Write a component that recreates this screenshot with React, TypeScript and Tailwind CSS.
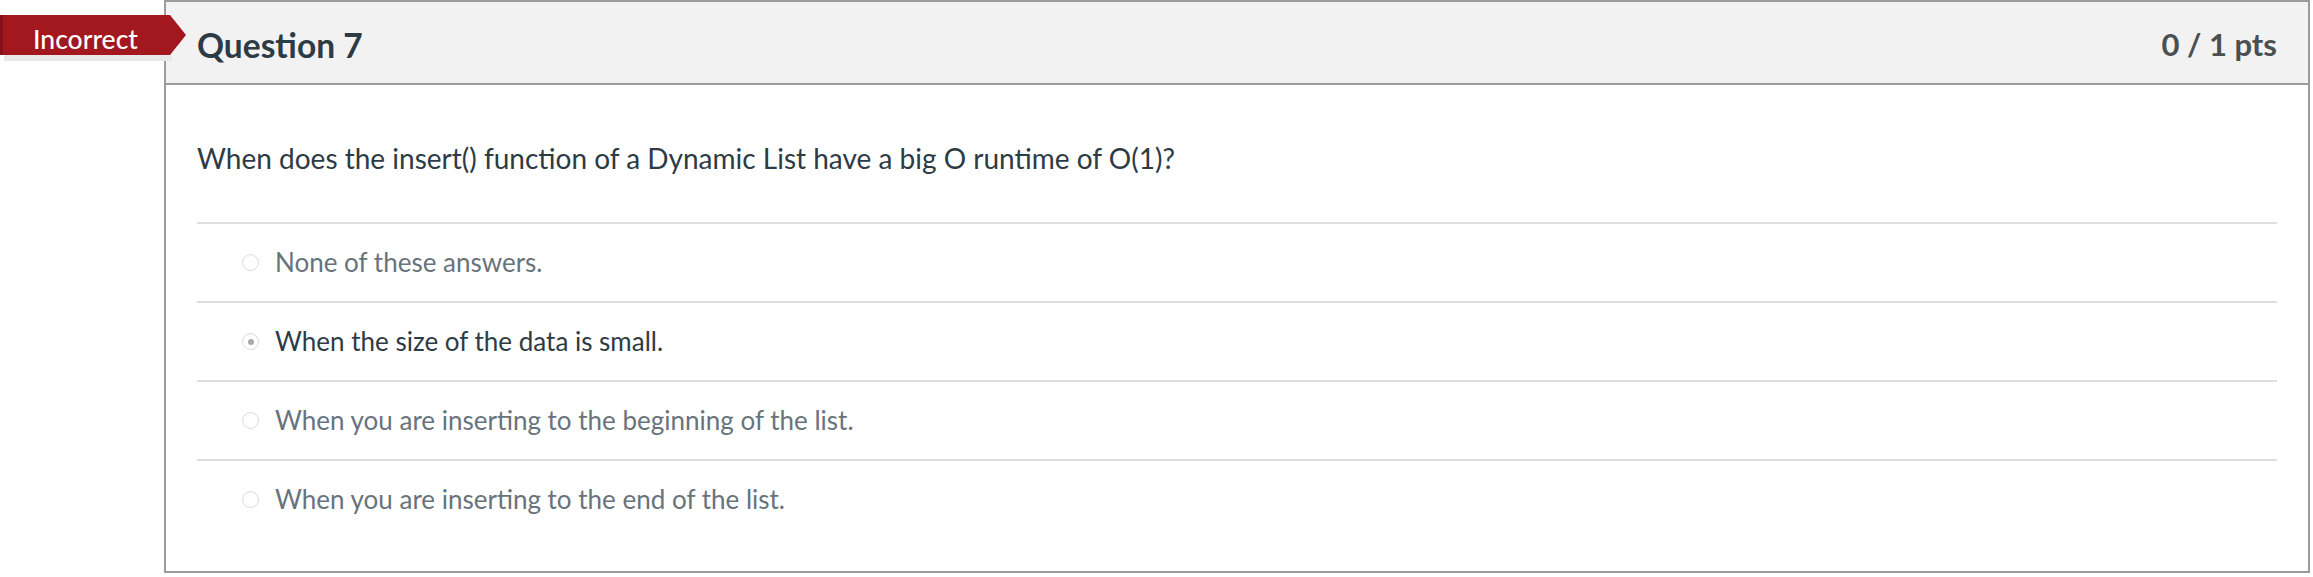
import React from "react";

type Answer = {
  text: string;
  selected?: boolean;
};

const answers: Answer[] = [
  { text: "None of these answers." },
  { text: "When the size of the data is small.", selected: true },
  { text: "When you are inserting to the beginning of the list." },
  { text: "When you are inserting to the end of the list." },
];

// Radio dot shown next to each answer
function Radio({ selected }: { selected?: boolean }) {
  return (
    <span className="flex h-[17px] w-[17px] flex-shrink-0 items-center justify-center rounded-full border border-[#dcdcdc] bg-white shadow-[inset_0_1px_1px_rgba(0,0,0,0.04)]">
      {selected && <span className="h-[6px] w-[6px] rounded-full bg-[#a9a9a9]" />}
    </span>
  );
}

export default function App() {
  return (
    <div className="relative h-[577px] w-[2313px] overflow-hidden bg-white font-['Lato','Noto_Sans',sans-serif]">
      {/* Question card */}
      <div className="ml-[164px] mr-[3px] box-border flex h-[573px] flex-col border-2 border-[#9b9b9b] bg-white">
        {/* Header */}
        <div className="flex h-[83px] flex-shrink-0 items-center justify-between border-b-2 border-[#9b9b9b] bg-[#f2f2f2] px-[31px] pt-[6px]">
          <h2 className="text-[33.5px] font-bold text-[#2d3b45]">Question 7</h2>
          <span className="pb-[2px] text-[31px] font-bold text-[#4b4f52]">0 / 1 pts</span>
        </div>

        {/* Body */}
        <div className="px-[31px]">
          <p className="pt-[55px] pb-[46px] text-[28px] leading-[36px] text-[#2d3b45]">
            When does the insert() function of a Dynamic List have a big O runtime of O(1)?
          </p>

          <div>
            {answers.map((a) => (
              <div
                key={a.text}
                className="box-border flex h-[79px] items-center gap-[16px] border-t-2 border-[#dedede] pl-[45px]"
              >
                <Radio selected={a.selected} />
                <span
                  className={
                    a.selected
                      ? "text-[26px] text-[#2d3b45]"
                      : "text-[26px] text-[#68737c]"
                  }
                >
                  {a.text}
                </span>
              </div>
            ))}
          </div>
        </div>
      </div>

      {/* Incorrect badge */}
      <div className="absolute left-[4px] top-[55px] h-[6px] w-[168px] bg-[#e8e8e8]" />
      <div className="absolute left-0 top-[15px] flex h-[40px] w-[186px] items-center border-l-[3px] border-[#85121a] bg-[#a3171e] pl-[30px] pt-[9px] [clip-path:polygon(0_0,170px_0,186px_50%,170px_100%,0_100%)]">
        <span className="text-[26.5px] font-medium leading-none text-white">Incorrect</span>
      </div>
    </div>
  );
}
